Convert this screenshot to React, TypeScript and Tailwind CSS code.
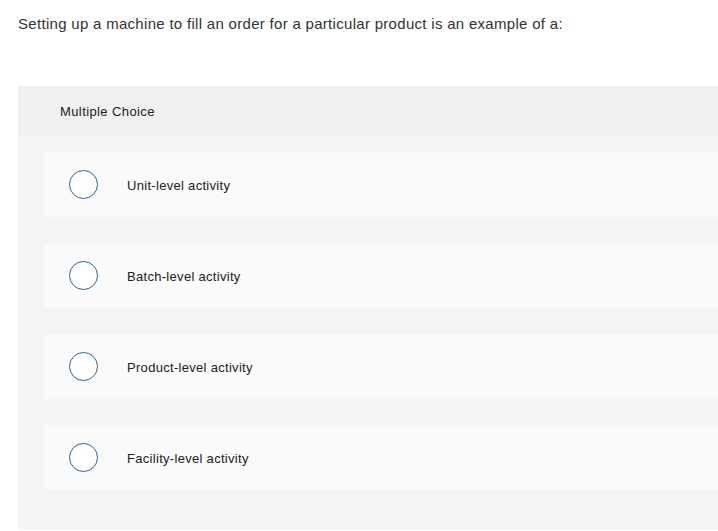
const options = [
  'Unit-level activity',
  'Batch-level activity',
  'Product-level activity',
  'Facility-level activity',
];

function Radio() {
  return (
    <span className="block h-[29px] w-[29px] shrink-0 rounded-full border-[1.5px] border-[#2d6396] bg-white" />
  );
}

export default function App() {
  return (
    <div className="h-[531px] w-[718px] overflow-hidden bg-white text-[#222] tracking-[0.3px] [font-family:'Liberation_Sans',Arial,sans-serif]">
      <p className="pl-[18px] pt-[14px] text-[15px] leading-[20px] text-[#333]">
        Setting up a machine to fill an order for a particular product is an example of a:
      </p>

      <div className="ml-[18px] mt-[52px] w-[740px] bg-[#f4f4f4] pb-[40px]">
        <div className="flex h-[50px] items-center bg-[#f0f0f0] pl-[42px] pt-[2px] text-[13px] tracking-[0.4px] text-[#222]">
          Multiple Choice
        </div>
        <div className="flex flex-col gap-[26px] pl-[26px] pt-[16px]">
          {options.map((label) => (
            <label
              key={label}
              className="flex h-[65px] cursor-pointer items-center rounded-[3px] bg-[#fafafa] pl-[25px]"
            >
              <Radio />
              <span className="ml-[29px] pt-[2px] text-[13px] text-[#222]">{label}</span>
            </label>
          ))}
        </div>
      </div>
    </div>
  );
}
